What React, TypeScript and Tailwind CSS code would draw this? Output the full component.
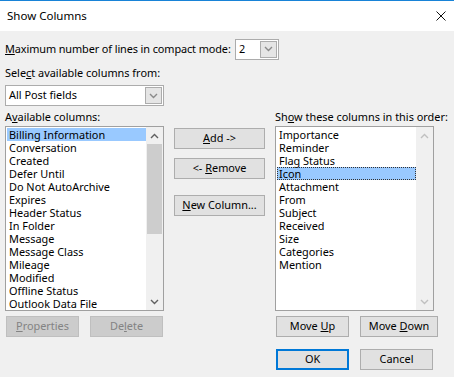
import React from 'react'

const available = [
  'Billing Information',
  'Conversation',
  'Created',
  'Defer Until',
  'Do Not AutoArchive',
  'Expires',
  'Header Status',
  'In Folder',
  'Message',
  'Message Class',
  'Mileage',
  'Modified',
  'Offline Status',
  'Outlook Data File',
]

const shown = [
  'Importance',
  'Reminder',
  'Flag Status',
  'Icon',
  'Attachment',
  'From',
  'Subject',
  'Received',
  'Size',
  'Categories',
  'Mention',
]

const Chevron = ({ up = false, color = '#606060' }: { up?: boolean; color?: string }) => (
  <svg width="9" height="6" viewBox="0 0 9 6" className={up ? 'rotate-180' : ''}>
    <path d="M1 1 L4.5 4.5 L8 1" fill="none" stroke={color} strokeWidth="1.4" />
  </svg>
)

const Combo = ({ value, width }: { value: string; width: string }) => (
  <div className={`${width} h-[21px] shrink-0 bg-white border border-[#acacac] flex items-center justify-between pl-[3px] pr-[1px]`}>
    <span>{value}</span>
    <div className="w-[17px] h-[17px] bg-[#e5e5e5] border border-[#acacac] flex items-center justify-center">
      <Chevron color="#8a8a8a" />
    </div>
  </div>
)

const Btn = ({
  children,
  width = 'w-[73px]',
  disabled = false,
  def = false,
}: {
  children: React.ReactNode
  width?: string
  disabled?: boolean
  def?: boolean
}) => (
  <div
    className={`${width} h-[21px] flex items-center justify-center ${
      disabled
        ? 'bg-[#cccccc] border border-[#bfbfbf] text-[#838383]'
        : def
        ? 'bg-[#e1e1e1] border-2 border-[#0078d7]'
        : 'bg-[#e1e1e1] border border-[#adadad]'
    }`}
  >
    {children}
  </div>
)

const ListBox = ({
  items,
  selected,
  focused = false,
  scrollable = true,
}: {
  items: string[]
  selected: number
  focused?: boolean
  scrollable?: boolean
}) => (
  <div className="w-[159px] h-[185px] bg-white border border-[#a0a0a0] flex">
    <div className="flex-1 pt-[1px] pl-[1px]">
      {items.map((item, i) => (
        <div
          key={item}
          className={`h-[13px] leading-[13px] pl-[2px] ${i === selected ? 'bg-[#99c9ff]' : ''} ${
            i === selected && focused ? 'outline outline-1 outline-dotted outline-[#333] -outline-offset-1' : ''
          }`}
        >
          {item}
        </div>
      ))}
    </div>
    <div className="w-[17px] bg-[#f0f0f0] flex flex-col">
      <div className="h-[17px] flex items-center justify-center">
        <Chevron up color={scrollable ? '#606060' : '#c0c0c0'} />
      </div>
      <div className="flex-1 px-[1px]">
        {scrollable && <div className="h-[90px] bg-[#cdcdcd]" />}
      </div>
      <div className="h-[17px] flex items-center justify-center">
        <Chevron color={scrollable ? '#606060' : '#c0c0c0'} />
      </div>
    </div>
  </div>
)

export default function App() {
  return (
    <div
      className="w-[454px] h-[377px] bg-[#f0f0f0] text-black text-[10.9px] overflow-hidden whitespace-nowrap"
      style={{ fontFamily: '"Noto Sans", "Open Sans", sans-serif' }}
    >
      {/* Title bar */}
      <div className="h-[31px] bg-white border-t border-[#1883d7] flex items-center justify-between pl-[7px] pr-[8px]">
        <span className="text-[11.5px]">Show Columns</span>
        <svg width="10" height="10" viewBox="0 0 10 10">
          <path d="M0.5 0.5 L9.5 9.5 M9.5 0.5 L0.5 9.5" stroke="#111" strokeWidth="1" />
        </svg>
      </div>

      <div className="pl-[5px]">
        {/* Compact mode lines */}
        <div className="mt-[8px] flex items-center h-[20px]">
          <span className="w-[230px] shrink-0 tracking-[-0.1px]">
            <u>M</u>aximum number of lines in compact mode:
          </span>
          <Combo value="2" width="w-[44px]" />
        </div>

        <div className="mt-[7px] h-[14px] leading-[14px]">
          Sele<u>c</u>t available columns from:
        </div>

        <div className="mt-[5px]">
          <Combo value="All Post fields" width="w-[159px]" />
        </div>

        <div className="mt-[4px] flex">
          {/* Available */}
          <div className="w-[159px]">
            <div className="h-[14px] leading-[14px]">
              A<u>v</u>ailable columns:
            </div>
            <div className="mt-[2px]">
              <ListBox items={available} selected={0} />
            </div>
            <div className="mt-[5px] flex gap-[11px] pl-[1px]">
              <Btn disabled>
                <span>
                  <u>P</u>roperties
                </span>
              </Btn>
              <Btn disabled>
                <span>
                  De<u>l</u>ete
                </span>
              </Btn>
            </div>
          </div>

          {/* Middle buttons */}
          <div className="ml-[10px] w-[91px] pt-[18px] flex flex-col">
            <Btn width="w-[91px]">
              <span>
                <u>A</u>dd -&gt;
              </span>
            </Btn>
            <div className="mt-[9px]">
              <Btn width="w-[91px]">
                <span>
                  &lt;- <u>R</u>emove
                </span>
              </Btn>
            </div>
            <div className="mt-[16px]">
              <Btn width="w-[91px]">
                <span>
                  <u>N</u>ew Column...
                </span>
              </Btn>
            </div>
          </div>

          {/* Shown */}
          <div className="ml-[10px] w-[163px]">
            <div className="h-[14px] leading-[14px]">
              Sh<u>o</u>w these columns in this order:
            </div>
            <div className="mt-[2px]">
              <ListBox items={shown} selected={3} focused scrollable={false} />
            </div>
            <div className="mt-[5px] flex gap-[11px] pl-[1px]">
              <Btn>
                <span>
                  Move <u>U</u>p
                </span>
              </Btn>
              <Btn width="w-[78px]">
                <span>
                  Move <u>D</u>own
                </span>
              </Btn>
            </div>
            <div className="mt-[12px] flex gap-[11px] pl-[1px]">
              <Btn def>OK</Btn>
              <Btn>Cancel</Btn>
            </div>
          </div>
        </div>
      </div>
    </div>
  )
}
